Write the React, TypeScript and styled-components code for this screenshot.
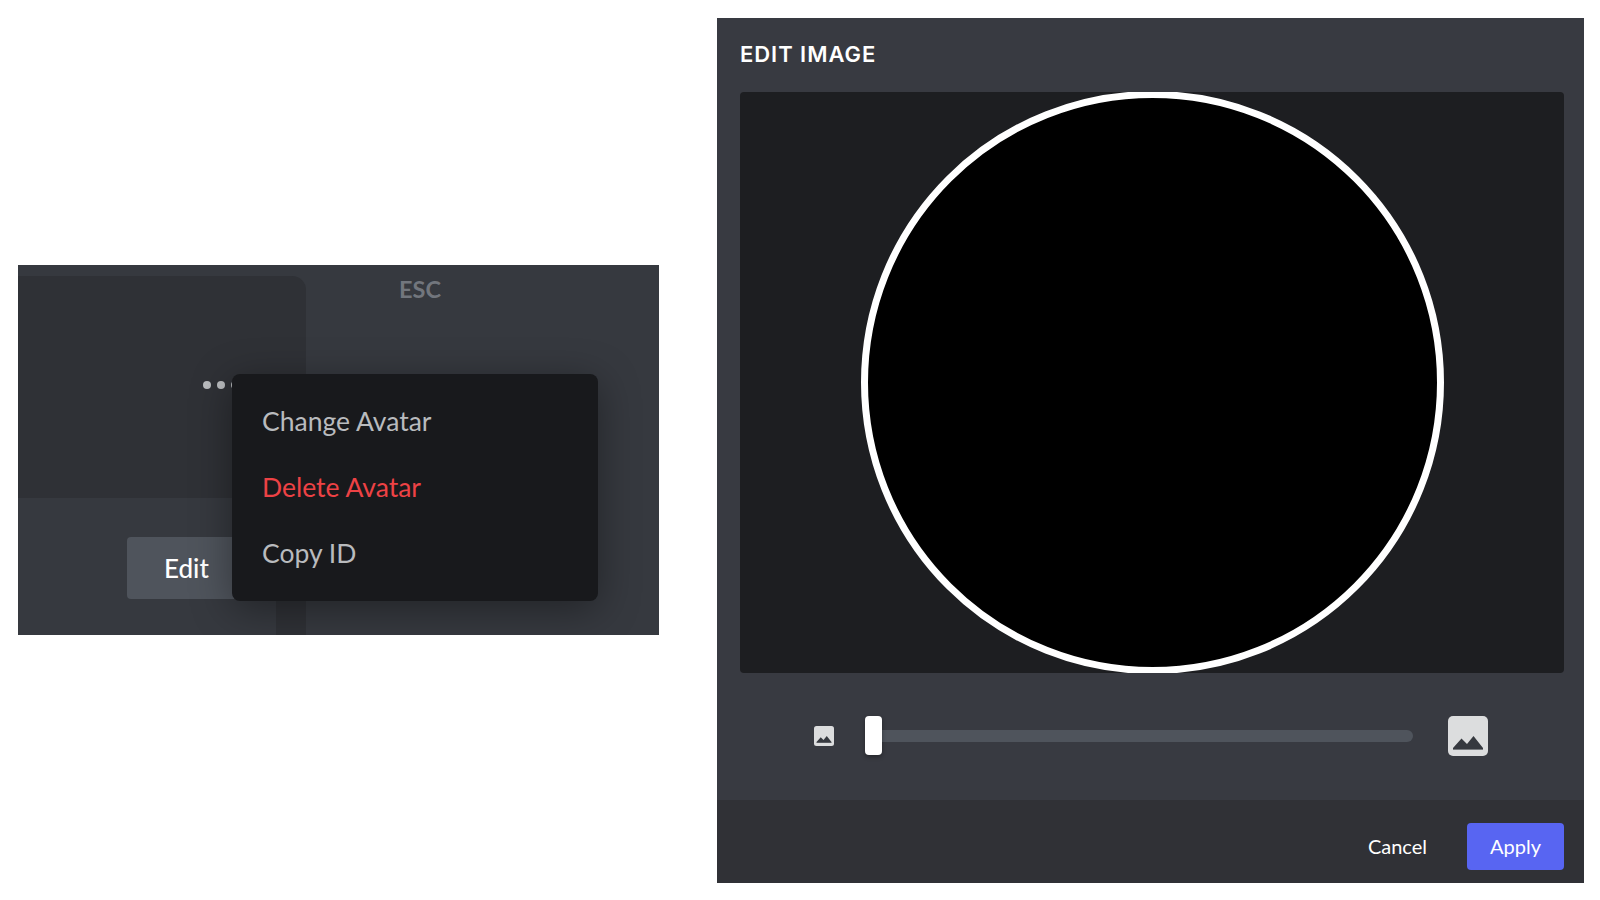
import React from "react";
import styled, { createGlobalStyle } from "styled-components";

const Global = createGlobalStyle`
  html, body { margin: 0; padding: 0; background: #fff; }
  * { box-sizing: border-box; }
`;

const Page = styled.div`
  height: 900px;
  width: 1600px;
  display: flex;
  align-items: center;
  gap: 58px;
  padding-left: 18px;
  font-family: Lato, "Open Sans", sans-serif;
`;

const ContextShot = styled.section`
  position: relative;
  width: 641px;
  height: 370px;
  background: #36393f;
  display: flex;
  overflow: hidden;
`;

const ProfileColumn = styled.div`
  width: 288px;
  display: flex;
  flex-direction: column;
  padding-top: 11px;
`;

const BannerCard = styled.div`
  position: relative;
  height: 222px;
  background: #2f3136;
  border-top-right-radius: 14px;
`;

const Dots = styled.div`
  position: absolute;
  top: 105px;
  left: 185px;
  display: flex;
  gap: 6px;
`;

const Dot = styled.span`
  width: 8px;
  height: 8px;
  border-radius: 50%;
  background: #b9bbbe;
`;

const LowerRow = styled.div`
  flex: 1;
  display: flex;
`;

const LowerBody = styled.div`
  width: 258px;
  padding: 39px 0 0 109px;
`;

const Strip = styled.div`
  width: 30px;
  background: #2f3136;
`;

const EditButton = styled.div`
  width: 118px;
  height: 62px;
  padding: 0 0 0 37px;
  background: #4f545c;
  border-radius: 4px;
  color: #fff;
  font-size: 26px;
  font-weight: 500;
  line-height: 62px;
`;

const EscColumn = styled.div`
  flex: 1;
  padding: 9px 0 0 93px;
  color: #72767d;
  font-size: 23.5px;
  font-weight: 700;
  line-height: 30px;
`;

const Menu = styled.div`
  position: absolute;
  left: 214px;
  top: 109px;
  width: 366px;
  height: 227px;
  padding: 14px 0 15px 30px;
  background: #18191c;
  border-radius: 8px;
  box-shadow: 0 8px 40px rgba(0, 0, 0, 0.38);
`;

const MenuItem = styled.div<{ $danger?: boolean }>`
  height: 66px;
  line-height: 66px;
  font-size: 26.5px;
  color: ${(p) => (p.$danger ? "#ed4245" : "#b9bbbe")};
`;

const Dialog = styled.section`
  width: 867px;
  height: 865px;
  background: #383a41;
  display: flex;
  flex-direction: column;
`;

const Title = styled.h2`
  margin: 0;
  height: 74px;
  padding: 0 0 0 23px;
  color: #fff;
  font-family: Inter, sans-serif;
  font-size: 22px;
  font-weight: 600;
  letter-spacing: 0.95px;
  line-height: 72px;
`;

const Stage = styled.div`
  margin: 0 20px 0 23px;
  height: 581px;
  background: #1d1e21;
  border-radius: 4px;
  display: flex;
  justify-content: center;
  align-items: center;
  overflow: hidden;
`;

const Crop = styled.div`
  flex: none;
  width: 583px;
  height: 583px;
  border-radius: 50%;
  border: 7px solid #fff;
  background: #000;
`;

const SliderRow = styled.div`
  flex: 1;
  display: flex;
  align-items: center;
  padding-left: 97px;
`;

const IconSvg = styled.svg<{ $size: number }>`
  width: ${(p) => p.$size}px;
  height: ${(p) => p.$size}px;
  flex: none;
`;

const Track = styled.div`
  position: relative;
  width: 548px;
  height: 12px;
  margin: 0 35px 0 31px;
  background: #4f545c;
  border-radius: 6px;
`;

const Thumb = styled.div`
  position: absolute;
  left: 0;
  top: -14px;
  width: 17px;
  height: 39px;
  background: #fff;
  border-radius: 4px;
  box-shadow: 0 2px 4px rgba(0, 0, 0, 0.35);
`;

const Footer = styled.div`
  height: 83px;
  background: #303136;
  display: flex;
  align-items: center;
  justify-content: flex-end;
  gap: 40px;
  padding: 11px 20px 0 0;
`;

const CancelLink = styled.span`
  padding-bottom: 2px;
  color: #fff;
  font-size: 20px;
`;

const ApplyButton = styled.div`
  width: 97px;
  height: 47px;
  background: #5865f2;
  border-radius: 4px;
  color: #fff;
  font-size: 20px;
  line-height: 47px;
  text-align: center;
`;

const ImageIcon = ({ size }: { size: number }) => (
  <IconSvg $size={size} viewBox="0 0 40 40">
    <rect width="40" height="40" rx="5" fill="#dcddde" />
    <path d="M5 32 L13.5 22.5 L19 28 L25.5 20 L35 32 Z" fill="#36393f" />
    <rect x="5" y="32" width="30" height="1.6" fill="#36393f" />
  </IconSvg>
);

export default function App() {
  return (
    <>
      <Global />
      <Page>
        <ContextShot>
          <ProfileColumn>
            <BannerCard>
              <Dots>
                <Dot />
                <Dot />
                <Dot />
              </Dots>
            </BannerCard>
            <LowerRow>
              <LowerBody>
                <EditButton>Edit</EditButton>
              </LowerBody>
              <Strip />
            </LowerRow>
          </ProfileColumn>
          <EscColumn>ESC</EscColumn>
          <Menu>
            <MenuItem>Change Avatar</MenuItem>
            <MenuItem $danger>Delete Avatar</MenuItem>
            <MenuItem>Copy ID</MenuItem>
          </Menu>
        </ContextShot>
        <Dialog>
          <Title>EDIT IMAGE</Title>
          <Stage>
            <Crop />
          </Stage>
          <SliderRow>
            <ImageIcon size={20} />
            <Track>
              <Thumb />
            </Track>
            <ImageIcon size={40} />
          </SliderRow>
          <Footer>
            <CancelLink>Cancel</CancelLink>
            <ApplyButton>Apply</ApplyButton>
          </Footer>
        </Dialog>
      </Page>
    </>
  );
}
